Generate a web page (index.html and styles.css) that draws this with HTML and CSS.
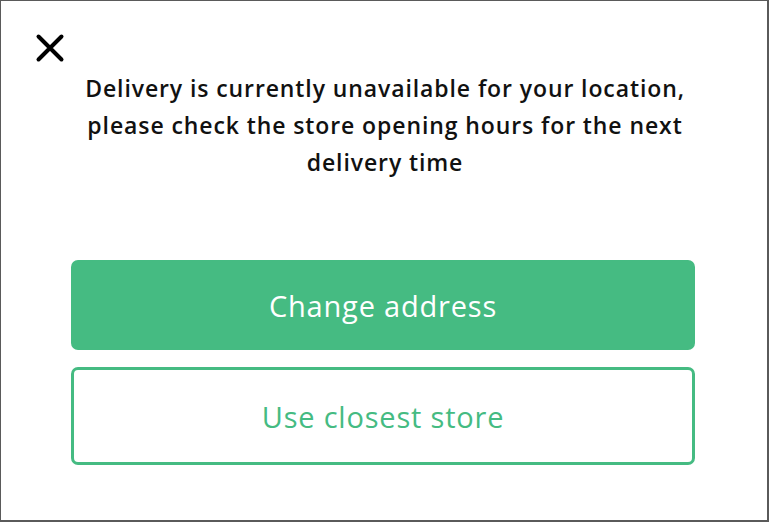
FILE: index.html
```html
<!DOCTYPE html>
<html>
<head>
<meta charset="utf-8">
<link rel="stylesheet" href="styles.css">
</head>
<body>
<div class="modal">
  <div class="top">
    <button class="close" aria-label="Close">
      <svg width="30" height="30" viewBox="0 0 30 30"><path d="M3.5 3.5 L26.5 26.5 M26.5 3.5 L3.5 26.5" stroke="#000" stroke-width="4" stroke-linecap="round" fill="none"/></svg>
    </button>
  </div>
  <p class="message">Delivery is currently unavailable for your location,<br>please check the store opening hours for the next<br>delivery time</p>
  <div class="actions">
    <button class="btn primary">Change address</button>
    <button class="btn secondary">Use closest store</button>
  </div>
</div>
</body>
</html>
```
FILE: styles.css
```css
html, body { margin: 0; padding: 0; background: #fff; }
.modal {
  box-sizing: border-box;
  width: 769px;
  height: 522px;
  border: 1px solid #5a5a5a;
  border-right-width: 2px;
  border-bottom-width: 2px;
  font-family: "Open Sans", "Noto Sans", sans-serif;
  display: flex;
  flex-direction: column;
  padding: 32px 72px 0 70px;
}
.top { height: 31px; margin-left: -36px; }
.close {
  border: 0; background: none; padding: 0; margin: 0;
  width: 30px; height: 30px; display: block; cursor: pointer;
}
.message {
  margin: 6px 0 0 0;
  padding-left: 4px;
  text-align: center;
  font-size: 23px;
  line-height: 37px;
  color: #111;
  font-weight: 600;
  letter-spacing: 0.9px;
}
.actions {
  margin-top: 79px;
  display: flex;
  flex-direction: column;
  gap: 17px;
}
.btn {
  font-family: inherit;
  width: 100%;
  border-radius: 7px;
  font-size: 29px;
  font-weight: 500;
  letter-spacing: 0.8px;
  cursor: pointer;
}
.primary {
  height: 90px;
  background: #45bb82;
  color: #fff;
  border: 0;
}
.secondary {
  height: 98px;
  background: #fff;
  color: #45bb82;
  border: 3px solid #45bb82;
}
```
